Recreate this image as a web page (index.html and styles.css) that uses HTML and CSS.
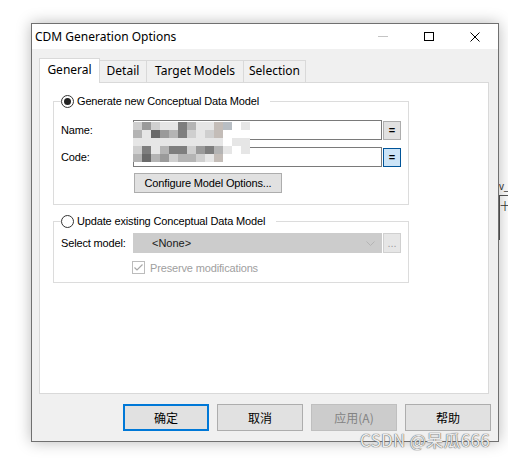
FILE: index.html
```html
<!DOCTYPE html>
<html lang="en">
<head>
    <meta charset="UTF-8">
    <meta name="viewport" content="width=device-width, initial-scale=1.0">
    <title>CDM Generation Options</title>
    <link rel="stylesheet" href="styles.css">
</head>
<body>
    <div class="backdrop">
        <div class="bd-top">v_</div>
        <div class="bd-row">十表</div>
    </div>

    <div class="window">
        <div class="titlebar">
            <span class="title">CDM Generation Options</span>
            <div class="controls">
                <span class="ctl"><span class="min-line"></span></span>
                <span class="ctl"><span class="max-box"></span></span>
                <span class="ctl">
                    <svg width="10" height="10" viewBox="0 0 10 10"><path d="M0.5 0.5 L9.5 9.5 M9.5 0.5 L0.5 9.5" stroke="#000" stroke-width="1" fill="none"/></svg>
                </span>
            </div>
        </div>

        <div class="client">
            <div class="tabs">
                <div class="tab active tab-general">General</div>
                <div class="tab tab-detail">Detail</div>
                <div class="tab tab-target">Target Models</div>
                <div class="tab tab-selection">Selection</div>
            </div>

            <div class="panel">
                <fieldset class="group">
                    <legend><span class="radio checked"></span>Generate new Conceptual Data Model</legend>
                    <div class="rows">
                        <div class="row">
                            <label for="name">Name:</label>
                            <input type="text" id="name" class="field">
                            <button class="eq">=</button>
                        </div>
                        <div class="row row-code">
                            <label for="code">Code:</label>
                            <input type="text" id="code" class="field">
                            <button class="eq focused">=</button>
                        </div>
                        <!-- 打码区域 -->
                        <div class="mosaic">
                            <i class="b"></i><i class="d"></i><i class="b"></i><i class="a"></i><i class="a"></i><i class="e"></i><i class="c"></i><i class="a"></i><i class="a"></i><i class="g"></i><i class="s"></i><i class="w"></i><i class="a"></i>
                            <i class="c"></i><i class="a"></i><i class="f"></i><i class="d"></i><i class="c"></i><i class="e"></i><i class="b"></i><i class="a"></i><i class="b"></i><i class="g"></i><i class="w"></i><i class="w"></i><i class="w"></i>
                            <i class="a"></i><i class="a"></i><i class="a"></i><i class="a"></i><i class="a"></i><i class="a"></i><i class="a"></i><i class="a"></i><i class="a"></i><i class="a"></i><i class="w"></i><i class="a"></i><i class="a"></i>
                            <i class="b"></i><i class="e"></i><i class="a"></i><i class="c"></i><i class="e"></i><i class="e"></i><i class="b"></i><i class="d"></i><i class="e"></i><i class="c"></i><i class="a"></i><i class="w"></i><i class="a"></i>
                            <i class="c"></i><i class="f"></i><i class="c"></i><i class="d"></i><i class="b"></i><i class="c"></i><i class="c"></i><i class="b"></i><i class="a"></i><i class="g"></i><i class="w"></i><i class="w"></i><i class="w"></i>
                        </div>
                    </div>
                    <button class="btn configure">Configure Model Options...</button>
                </fieldset>

                <fieldset class="group group-update">
                    <legend><span class="radio"></span>Update existing Conceptual Data Model</legend>
                    <div class="row row-select">
                        <label for="model">Select model:</label>
                        <div class="select" id="model">
                            <span>&lt;None&gt;</span>
                            <svg class="chevron" width="9" height="5" viewBox="0 0 9 5"><path d="M0.5 0.5 L4.5 4.5 L8.5 0.5" stroke="#b4b4b4" fill="none"/></svg>
                        </div>
                        <button class="eq dots" disabled>...</button>
                    </div>
                    <div class="check-row">
                        <span class="checkbox">
                            <svg width="11" height="11" viewBox="0 0 11 11"><path d="M1.5 5.5 L4 8 L9.5 2.5" stroke="#a8a8a8" stroke-width="1.2" fill="none"/></svg>
                        </span>
                        <span class="check-label">Preserve modifications</span>
                    </div>
                </fieldset>
            </div>

            <div class="actions">
                <button class="btn-action default">确定</button>
                <button class="btn-action">取消</button>
                <button class="btn-action" disabled>应用(A)</button>
                <button class="btn-action">帮助</button>
            </div>
        </div>
    </div>

    <div class="watermark">CSDN @呆瓜666</div>
</body>
</html>
```

FILE: styles.css
```css
body {
    margin: 0;
    padding: 23px 0 0 31px;
    background-color: #ffffff;
    font-family: 'Liberation Sans', Arial, sans-serif;
    font-size: 11px;
    color: #000;
    position: relative;
    height: 459px;
    box-sizing: border-box;
    overflow: hidden;
}
.backdrop {
    position: absolute;
    left: 499px;
    top: 180px;
    width: 9px;
    overflow: hidden;
    white-space: nowrap;
    font-size: 10px;
    color: #333;
}
.bd-top {
    height: 15px;
    border-bottom: 1px solid #555;
    line-height: 14px;
}
.bd-row {
    height: 44px;
    border-left: 1px solid #555;
    line-height: 20px;
    font-family: 'Noto Sans CJK SC', sans-serif;
}
.window {
    position: relative;
    width: 468px;
    height: 419px;
    box-sizing: border-box;
    border: 1px solid #707070;
    background-color: #f0f0f0;
    box-shadow: 0 0 14px rgba(0,0,0,0.28);
    display: flex;
    flex-direction: column;
}
.titlebar {
    height: 25px;
    background-color: #fff;
    display: flex;
    align-items: center;
    justify-content: space-between;
    font-family: 'Noto Sans', sans-serif;
    font-size: 12px;
}
.title {
    padding-left: 3px;
    color: #000;
}
.controls {
    display: flex;
    height: 100%;
}
.ctl {
    width: 46px;
    height: 100%;
    display: flex;
    align-items: center;
    justify-content: center;
}
.min-line {
    width: 10px;
    height: 1px;
    background-color: #c4c4c4;
}
.max-box {
    width: 10px;
    height: 9px;
    box-sizing: border-box;
    border: 1px solid #000;
}
.client {
    flex: 1;
    padding: 9px 7px 0 7px;
}
.tabs {
    display: flex;
    align-items: flex-start;
    height: 24px;
    font-family: 'Noto Sans', sans-serif;
    font-size: 12px;
}
.tab {
    box-sizing: border-box;
    height: 22px;
    margin-top: 2px;
    margin-left: -1px;
    border: 1px solid #d9d9d9;
    border-bottom: none;
    background-color: #f0f0f0;
    text-align: center;
    line-height: 20px;
    color: #000;
}
.tab.active {
    height: 25px;
    margin-top: 0;
    margin-left: 0;
    background-color: #fff;
    position: relative;
    z-index: 1;
    line-height: 22px;
}
.tab-general { width: 61px; }
.tab-detail { width: 48px; }
.tab-target { width: 98px; }
.tab-selection { width: 63px; }

.panel {
    width: 450px;
    height: 312px;
    box-sizing: border-box;
    border: 1px solid #d9d9d9;
    background-color: #fff;
    padding: 11px 0 0 13px;
}
.group {
    width: 356px;
    box-sizing: border-box;
    margin: 0;
    padding: 0 6px 11px 7px;
    border: 1px solid #dcdcdc;
    min-width: 0;
}
.group legend {
    padding: 0 11px 0 0;
    height: 14px;
    display: flex;
    align-items: center;
    letter-spacing: -0.15px;
}
.radio {
    width: 13px;
    height: 13px;
    box-sizing: border-box;
    border: 1px solid #333;
    border-radius: 50%;
    margin-right: 3px;
    position: relative;
    flex-shrink: 0;
}
.radio.checked::after {
    content: '';
    position: absolute;
    left: 2px;
    top: 2px;
    width: 7px;
    height: 7px;
    border-radius: 50%;
    background-color: #222;
}
.rows {
    position: relative;
    margin-top: 12px;
}
.row {
    display: flex;
    align-items: center;
    height: 20px;
}
.row-code {
    margin-top: 7px;
}
.row label {
    width: 72px;
    letter-spacing: -0.15px;
}
.field {
    width: 249px;
    height: 20px;
    box-sizing: border-box;
    margin: 0;
    border: 1px solid #7a7a7a;
    background-color: #fff;
    padding: 0 3px;
    font-family: 'Liberation Sans', sans-serif;
    font-size: 11px;
}
.eq {
    width: 18px;
    height: 19px;
    box-sizing: border-box;
    margin: 0 0 0 1px;
    padding: 0;
    border: 1px solid #adadad;
    background-color: #e1e1e1;
    font-family: 'Liberation Sans', sans-serif;
    font-size: 11px;
    font-weight: bold;
    color: #000;
}
.eq.focused {
    border-color: #005499;
    background-color: #cce4f7;
}
.mosaic {
    position: absolute;
    left: 72px;
    top: 2px;
    display: grid;
    grid-template-columns: repeat(13, 9px);
    grid-auto-rows: 8px;
}
.mosaic i { display: block; }
.mosaic .a { background-color: #e6e6e6; }
.mosaic .b { background-color: #cfcfcf; }
.mosaic .c { background-color: #b4b4b4; }
.mosaic .d { background-color: #9a9a9a; }
.mosaic .e { background-color: #7e7e7e; }
.mosaic .f { background-color: #6a6a6a; }
.mosaic .g { background-color: #c4bdb8; }
.mosaic .s { background-color: #b8bec4; }
.mosaic .w { background-color: #ffffff; }

.btn {
    box-sizing: border-box;
    border: 1px solid #adadad;
    background-color: #e1e1e1;
    font-family: 'Liberation Sans', sans-serif;
    font-size: 11px;
    color: #000;
    padding: 0;
}
.configure {
    display: block;
    width: 148px;
    height: 20px;
    margin: 6px 0 0 73px;
    letter-spacing: -0.15px;
}
.group-update {
    margin-top: 9px;
    padding-bottom: 8px;
}
.row-select {
    margin-top: 5px;
}
.select {
    width: 249px;
    height: 20px;
    box-sizing: border-box;
    background-color: #cccccc;
    border: 1px solid #cccccc;
    display: flex;
    align-items: center;
    justify-content: space-between;
    padding: 0 6px 0 18px;
    color: #1a1a1a;
}
.dots {
    height: 20px;
    background-color: #e6e6e6;
    border-color: #d0d0d0;
    color: #a0a0a0;
    font-weight: normal;
}
.check-row {
    display: flex;
    align-items: center;
    margin: 8px 0 0 71px;
    height: 13px;
}
.checkbox {
    width: 13px;
    height: 13px;
    box-sizing: border-box;
    border: 1px solid #bcbcbc;
    background-color: #fff;
    display: flex;
    align-items: center;
    justify-content: center;
    margin-right: 5px;
}
.check-label {
    color: #a0a0a0;
    letter-spacing: -0.15px;
}
.actions {
    display: flex;
    justify-content: flex-end;
    gap: 8px;
    margin-top: 10px;
}
.btn-action {
    width: 86px;
    height: 27px;
    box-sizing: border-box;
    border: 1px solid #adadad;
    background-color: #e1e1e1;
    font-family: 'Noto Sans CJK SC', sans-serif;
    font-size: 12px;
    color: #000;
    padding: 0;
}
.btn-action.default {
    border: 2px solid #0078d7;
}
.btn-action:disabled {
    background-color: #cccccc;
    border-color: #bfbfbf;
    color: #838383;
}
.watermark {
    position: absolute;
    left: 360px;
    top: 427px;
    font-family: 'Noto Sans CJK SC', sans-serif;
    font-size: 17px;
    color: #ececec;
    text-shadow: 0 0 1px #555, 0 0 1px #555;
    letter-spacing: 0.3px;
}
```
